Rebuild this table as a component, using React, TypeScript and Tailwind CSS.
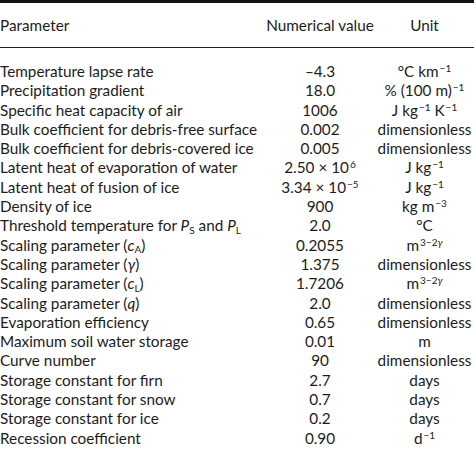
import React from "react";

const Sup = ({ children }: { children: React.ReactNode }) => (
  <sup className="text-[10px] ml-[1px]">{children}</sup>
);
const Sub = ({ children }: { children: React.ReactNode }) => (
  <sub className="text-[10px] not-italic">{children}</sub>
);

const rows: [React.ReactNode, React.ReactNode, React.ReactNode][] = [
  ["Temperature lapse rate", "–4.3", <>°C km<Sup>−1</Sup></>],
  ["Precipitation gradient", "18.0", <>% (100 m)<Sup>−1</Sup></>],
  ["Specific heat capacity of air", "1006", <>J kg<Sup>−1</Sup> K<Sup>−1</Sup></>],
  ["Bulk coefficient for debris-free surface", "0.002", "dimensionless"],
  ["Bulk coefficient for debris-covered ice", "0.005", "dimensionless"],
  ["Latent heat of evaporation of water", <>2.50 × 10<Sup>6</Sup></>, <>J kg<Sup>−1</Sup></>],
  ["Latent heat of fusion of ice", <>3.34 × 10<Sup>−5</Sup></>, <>J kg<Sup>−1</Sup></>],
  ["Density of ice", "900", <>kg m<Sup>−3</Sup></>],
  [
    <>Threshold temperature for <i>P</i><Sub>S</Sub> and <i>P</i><Sub>L</Sub></>,
    "2.0",
    "°C",
  ],
  [<>Scaling parameter (<i>c</i><Sub>A</Sub>)</>, "0.2055", <>m<Sup>3−2<i>γ</i></Sup></>],
  [<>Scaling parameter (<i>γ</i>)</>, "1.375", "dimensionless"],
  [<>Scaling parameter (<i>c</i><Sub>L</Sub>)</>, "1.7206", <>m<Sup>3−2<i>γ</i></Sup></>],
  [<>Scaling parameter (<i>q</i>)</>, "2.0", "dimensionless"],
  ["Evaporation efficiency", "0.65", "dimensionless"],
  ["Maximum soil water storage", "0.01", "m"],
  ["Curve number", "90", "dimensionless"],
  ["Storage constant for firn", "2.7", "days"],
  ["Storage constant for snow", "0.7", "days"],
  ["Storage constant for ice", "0.2", "days"],
  ["Recession coefficient", "0.90", <>d<Sup>−1</Sup></>],
];

export default function App() {
  return (
    <div className="w-[474px] h-[465px] bg-white text-[#1c1c1c] text-[15.3px] font-['Lato','Liberation_Sans',sans-serif] overflow-hidden whitespace-nowrap">
      <div className="h-[3px] bg-[#111]" />
      <div className="grid grid-cols-[265px_110px_99px] h-[45px] items-center border-b-[1.5px] border-[#222]">
        <div>Parameter</div>
        <div className="text-center">Numerical value</div>
        <div className="text-center">Unit</div>
      </div>
      <div className="pt-[14px]">
        {rows.map(([p, v, u], i) => (
          <div key={i} className="grid grid-cols-[265px_110px_99px] h-[19.3px] leading-[19.3px]">
            <div>{p}</div>
            <div className="text-center">{v}</div>
            <div className="text-center">{u}</div>
          </div>
        ))}
      </div>
    </div>
  );
}
